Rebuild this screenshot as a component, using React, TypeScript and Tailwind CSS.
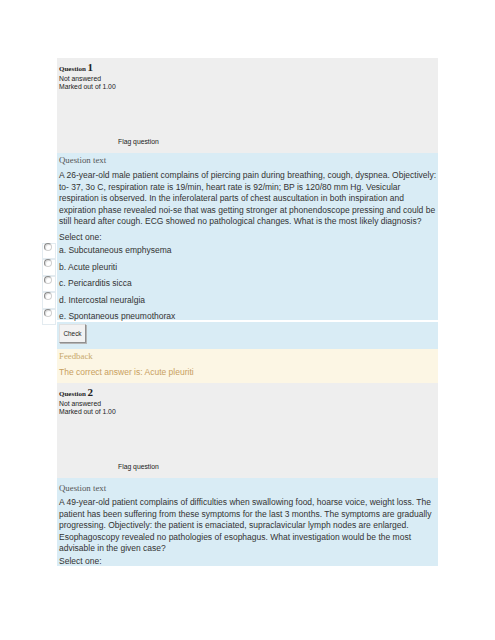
import React from "react";

const sans = { fontFamily: '"Liberation Sans", Arial, sans-serif' };

function InfoBox({ n }: { n: number }) {
  return (
    <div className="flex h-[95px] flex-col justify-between bg-[#eeeeee] pl-[2px] pt-[2px] pb-[7px] text-[#222]">
      <div>
        <div className="font-['Liberation_Serif',serif] font-bold leading-[11px]">
          <span className="text-[7px]">Question </span>
          <span className="text-[11px]">{n}</span>
        </div>
        <div className="font-['Liberation_Sans',Arial,sans-serif] text-[6.8px] leading-[8px]">Not answered</div>
        <div className="font-['Liberation_Sans',Arial,sans-serif] text-[6.8px] leading-[8px]">Marked out of 1.00</div>
      </div>
      <div className="pl-[59px] font-['Liberation_Sans',Arial,sans-serif] text-[6.8px] leading-[8px]">Flag question</div>
    </div>
  );
}

function Para({ lines }: { lines: string[] }) {
  return (
    <div className="font-['Liberation_Sans',Arial,sans-serif] text-[8.5px] leading-[11.5px] text-[#333]">
      {lines.map((l, i) => (
        <div key={i} className="whitespace-nowrap">
          {l}
        </div>
      ))}
    </div>
  );
}

function Radio() {
  return (
    <div className="-ml-[17px] flex h-full w-[14px] shrink-0 items-start justify-start border border-[#e3ebf0] bg-white pl-[1px]">
      <span className="-mt-[1px] block h-[8px] w-[8px] rounded-full border border-t-[#8a8a8a] border-l-[#8a8a8a] border-r-[#d0d0d0] border-b-[#d0d0d0] bg-white shadow-[inset_1px_1px_1px_rgba(0,0,0,0.15)]" />
    </div>
  );
}

const q1 = [
  "A 26-year-old male patient complains of piercing pain during breathing, cough, dyspnea. Objectively:",
  "to- 37, 3o C, respiration rate is 19/min, heart rate is 92/min; BP is 120/80 mm Hg. Vesicular",
  "respiration is observed. In the inferolateral parts of chest auscultation in both inspiration and",
  "expiration phase revealed noi-se that was getting stronger at phonendoscope pressing and could be",
  "still heard after cough. ECG showed no pathological changes. What is the most likely diagnosis?",
];

const q2 = [
  "A 49-year-old patient complains of difficulties when swallowing food, hoarse voice, weight loss. The",
  "patient has been suffering from these symptoms for the last 3 months. The symptoms are gradually",
  "progressing. Objectively: the patient is emaciated, supraclavicular lymph nodes are enlarged.",
  "Esophagoscopy revealed no pathologies of esophagus. What investigation would be the most",
  "advisable in the given case?",
];

const options = [
  "a. Subcutaneous emphysema",
  "b. Acute pleuriti",
  "c. Pericarditis sicca",
  "d. Intercostal neuralgia",
  "e. Spontaneous pneumothorax",
];

export default function App() {
  return (
    <div className="min-h-[640px] w-[495px] bg-white pt-[58px]" style={sans}>
      <div className="mx-auto w-[381px]">
        <InfoBox n={1} />
        <div className="h-[167px] bg-[#d9ecf5] pl-[2px] pt-[2px]">
          <div className="font-['Liberation_Serif',serif] text-[8.8px] leading-[11px] text-[#555]">Question text</div>
          <div className="mt-[4px]">
            <Para lines={q1} />
          </div>
          <div className="mt-[4px] font-['Liberation_Sans',Arial,sans-serif] text-[8.5px] leading-[11px] text-[#333]">
            Select one:
          </div>
          <div className="flex flex-col">
            {options.map((o) => (
              <div key={o} className="flex h-[16.5px] items-stretch">
                <Radio />
                <div className="flex items-end pb-[4px] pl-[3px] font-['Liberation_Sans',Arial,sans-serif] text-[8.5px] leading-[10px] text-[#333]">
                  {o}
                </div>
              </div>
            ))}
          </div>
        </div>
        <div className="mt-[2px] h-[27px] bg-[#d9ecf5] pl-[2px] pt-[2px]">
          <div className="flex h-[19px] w-[27px] items-center justify-center border border-t-[#e0e0e0] border-l-[#e0e0e0] border-r-[#8f8f8f] border-b-[#8f8f8f] bg-[#f2f2f2] font-['Liberation_Sans',Arial,sans-serif] text-[6.4px] text-[#222] shadow-[1px_1px_0_#b5b5b5]">
            Check
          </div>
        </div>
        <div className="h-[34px] bg-[#fcf6e4] pl-[2px] pt-[2px]">
          <div className="font-['Liberation_Serif',serif] text-[8.8px] leading-[11px] text-[#c8a96c]">Feedback</div>
          <div className="mt-[5px] font-['Liberation_Sans',Arial,sans-serif] text-[8.5px] leading-[11px] text-[#c8a060]">
            The correct answer is: Acute pleuriti
          </div>
        </div>
        <InfoBox n={2} />
        <div className="h-[88px] bg-[#d9ecf5] pl-[2px] pt-[5px]">
          <div className="font-['Liberation_Serif',serif] text-[8.8px] leading-[11px] text-[#555]">Question text</div>
          <div className="mt-[3px]">
            <Para lines={q2} />
          </div>
          <div className="mt-[1px] font-['Liberation_Sans',Arial,sans-serif] text-[8.5px] leading-[11px] text-[#333]">
            Select one:
          </div>
        </div>
      </div>
    </div>
  );
}
